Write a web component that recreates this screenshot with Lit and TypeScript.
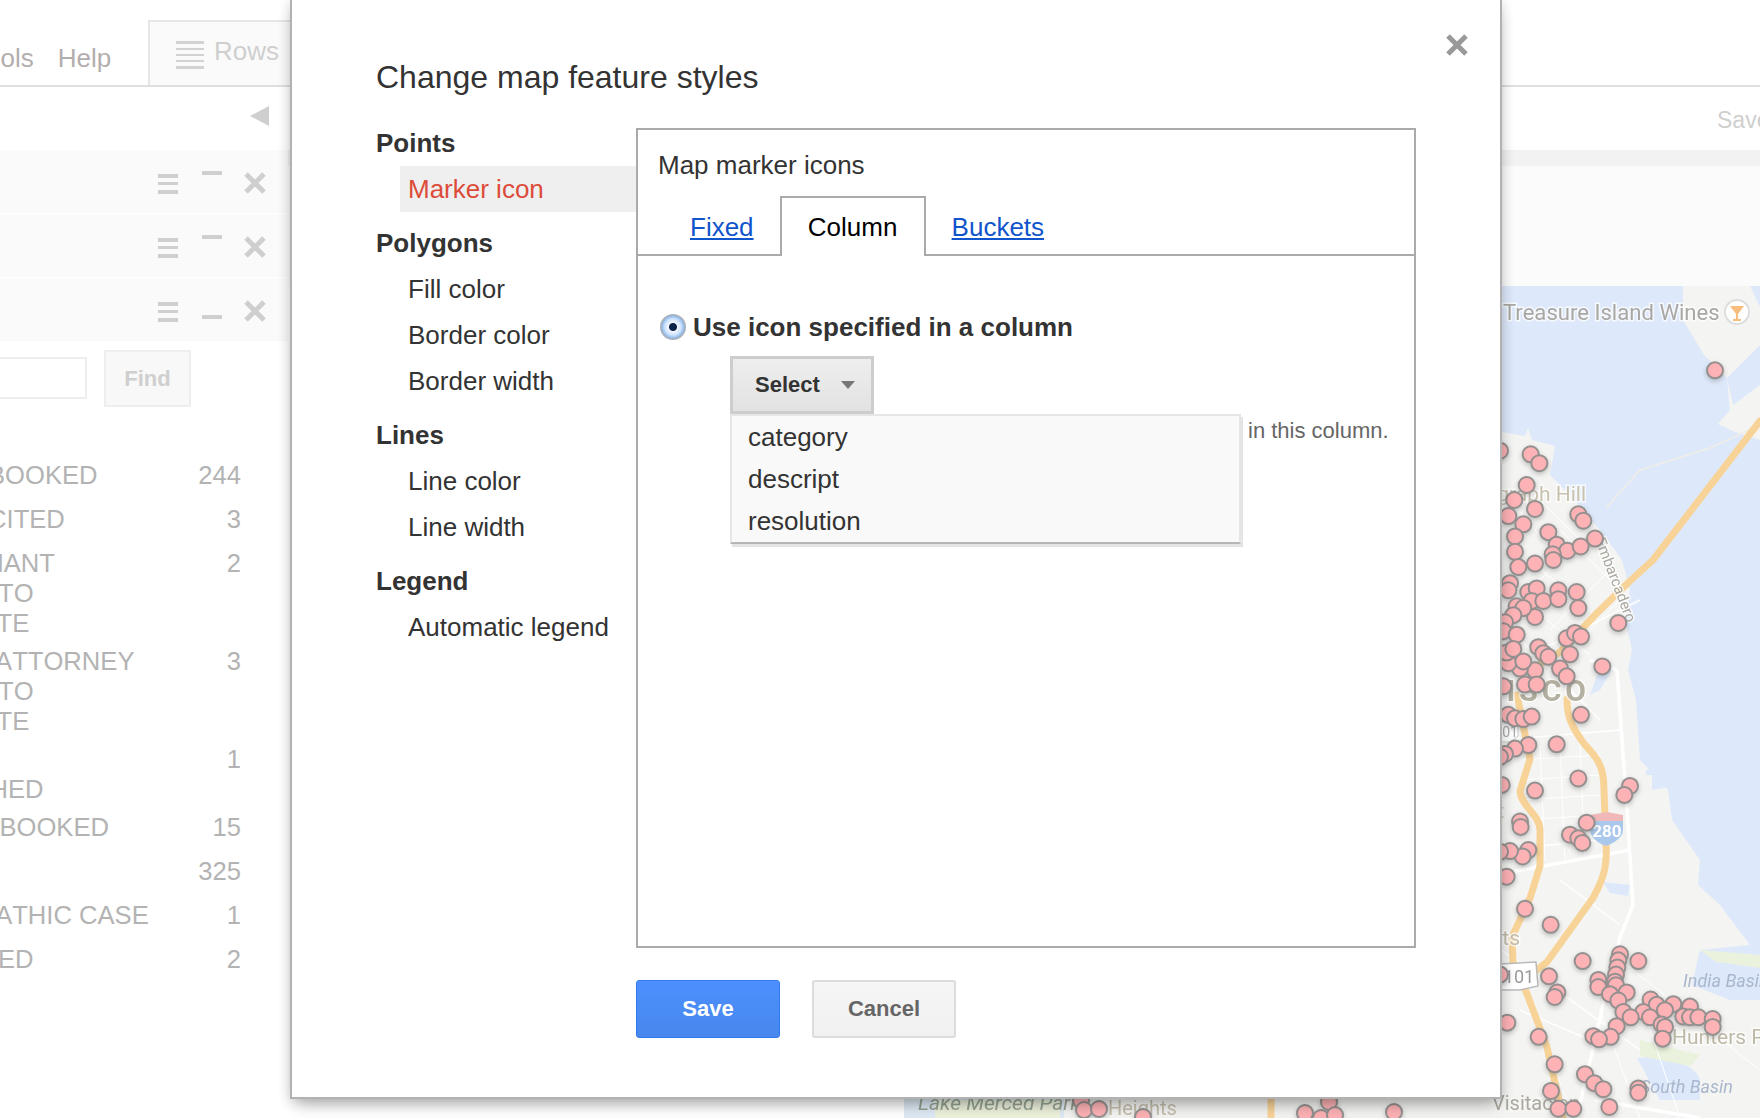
import { LitElement, html, css, svg } from "lit";
import { customElement } from "lit/decorators.js";

const Z5: [number, number][] = [[115,20],[165,10],[220,0],[90,65],[85,85],[145,90],[170,80],[155,115],[190,115],[235,85],[235,110],[290,90],[295,135],[165,160],[110,130],[130,135],[100,155],[75,175],[70,200],[110,210],[175,245],[190,262],[205,272],[260,220],[285,205],[303,215],[270,265],[415,177],[367,299],[240,305],[260,327],[165,310],[120,305],[85,290],[80,260],[100,250],[130,285],[135,350],[170,350],[70,355],[303,435],[85,435],[105,445],[130,447],[155,440],[145,520],[230,518],[105,530],[75,545],[60,553],[295,614],[165,648],[65,632],[450,635],[433,660],[320,738],[270,772],[295,782],[307,795],[120,735],[122,750],[145,815],[128,833],[90,818],[60,820],[80,890],[135,980],[212,1025],[308,1127],[420,1108],[475,1127],[415,1125],[412,1145],[408,1165],[405,1185],[355,1180],[355,1200],[408,1195],[440,1215],[390,1220],[415,1238],[207,1170],[232,1215],[224,1228],[512,1235],[530,1250],[580,1248],[555,1265],[630,1255],[610,1283],[630,1285],[655,1285],[698,1290],[698,1312],[490,1270],[510,1285],[430,1270],[452,1285],[545,1305],[555,1312],[410,1310],[392,1340],[340,1338],[357,1347],[548,1345],[82,1300],[176,1340],[224,1417],[315,1445],[343,1470],[370,1487],[475,1485],[475,1497],[213,1492],[235,1542],[280,1542],[388,1537],[60,1165]];
const Z4: [number, number][] = [[705,1037],[60,1262],[152,1272],[178,1297],[140,1358],[103,1400],[165,1425],[85,1445],[130,1468],[295,1440],[310,1458],[345,1508],[105,1502],[205,1490],[230,1525],[262,1542],[302,1530],[105,1545],[218,1552]];
const PINS: [number, number][] = [
  ...Z4.map(([x, y]) => [1480 + x / 3, y / 2.8] as [number, number]),
  ...Z5.map(([x, y]) => [1480 + x / 3, 560 + y / 2.81] as [number, number]),
  [1081,1100],[1084,1110],[1099,1109],[1143,1117],[1329,1102],[1305,1113],[1321,1118],[1335,1115],[1394,1112],
];

const ROWS: [string[], string][] = [
  [["ARREST, BOOKED"], "244"],
  [["ARREST, CITED"], "3"],
  [["COMPLAINANT", "REFUSES TO", "PROSECUTE"], "2"],
  [["DISTRICT ATTORNEY", "REFUSES TO", "PROSECUTE"], "3"],
  [["JUVENILE", "ADMONISHED"], "1"],
  [["JUVENILE BOOKED"], "15"],
  [["NONE"], "325"],
  [["PSYCHOPATHIC CASE"], "1"],
  [["UNFOUNDED"], "2"],
];

const NAV: [string, string[]][] = [
  ["Points", ["Marker icon"]],
  ["Polygons", ["Fill color", "Border color", "Border width"]],
  ["Lines", ["Line color", "Line width"]],
  ["Legend", ["Automatic legend"]],
];

@customElement("map-layer")
class MapLayer extends LitElement {
  static styles = css`
    :host { display: block; width: 856px; height: 832px; overflow: hidden; }
    svg { display: block; filter: blur(.6px); }
    text { font-family: Roboto, "Liberation Sans", sans-serif; }
    .halo { paint-order: stroke; stroke: rgba(255,255,255,.7); stroke-width: 3px; }
  `;
  render() {
    return html`<svg width="856" height="832" viewBox="904 286 856 832">
      <defs><filter id="b" x="-50%" y="-50%" width="200%" height="200%"><feGaussianBlur stdDeviation="2.5"/></filter></defs>
      <rect x="904" y="286" width="856" height="832" fill="#dde9fb"/>
      <path fill="#f4f4f2" d="M1683 286L1750 286L1760 307L1760 345L1727 378L1704 355L1683 320Z"/>
      <path fill="#f4f4f2" d="M1727 378L1733 405L1760 385L1760 440L1735 432L1718 424L1730 410Z"/>
      <path fill="#f4f4f2" d="M1501 432L1525 436L1528 428L1532 440L1555 446L1550 475L1575 500L1600 530L1622 560L1630 590L1625 620L1632 650L1628 670L1636 700L1640 760L1668 790L1672 820L1700 860L1698 885L1720 905L1750 945L1700 950L1692 985L1730 1000L1760 1000L1760 1118L1501 1118Z"/>
      <path fill="#dde9fb" d="M1637 1058C1660 1055 1695 1062 1700 1080L1700 1100L1660 1100Z"/>
      <path fill="#dde9fb" d="M1597 675L1612 670L1600 690L1590 695Z"/>
      <path fill="#dde9fb" d="M1603 882L1630 885L1628 896L1610 893Z"/>
      <path fill="#eaf2dd" d="M1700 950L1760 955L1760 968L1716 962Z"/>
      <path fill="#eaf2dd" d="M1640 1040L1700 1055L1690 1066L1640 1056Z"/>
      <path fill="#dde9fb" d="M1646 775L1652 775L1652 790L1680 785L1680 760L1675 760L1675 780L1660 782L1660 770L1646 770Z"/>
      <path fill="none" stroke="#f0ede6" stroke-width="1.5" d="M1606 508L1640 470L1710 448L1760 425"/>
      <rect x="904" y="1090" width="160" height="28" fill="#dfeaf6"/>
      <rect x="935" y="1100" width="125" height="18" fill="#edf2dc"/>
      <rect x="1064" y="1090" width="440" height="28" fill="#f4f4f2"/>
      <g fill="none" stroke="#ffffff" stroke-linejoin="round">
        <path stroke-width="1.5" d="M1501 620L1600 720M1501 670L1640 600M1501 740L1620 730M1501 850L1600 840M1501 950L1640 1050M1560 880L1620 925M1520 1010L1590 1040M1510 1110L1560 1090"/>
        <path stroke-width="1" d="M1520 760L1600 755M1520 780L1600 775M1520 800L1600 795M1520 820L1600 815M1540 745L1545 860M1560 745L1565 860M1580 745L1585 860M1530 560L1600 620M1560 530L1620 590M1510 590L1590 655M1580 540L1520 600M1610 570L1550 630M1620 600L1560 660M1510 500L1560 560M1530 490L1590 550M1530 1000L1570 1110M1600 1010L1640 1118M1640 1000L1680 1118M1620 960L1760 1070"/>
        <path stroke-width="3.5" d="M1617 670L1627 809L1633 905L1620 937L1603 1005L1580 1104M1590 660L1617 670M1500 874L1630 850M1595 1100L1700 1118"/>
      </g>
      <g fill="none" stroke="#f8d398" stroke-linecap="round" stroke-linejoin="round" stroke-width="7">
        <path d="M1760 421L1653 560L1630 581L1597 613L1560 652L1530 670"/>
        <path d="M1567 699C1567 715 1570 725 1585 745C1600 760 1604 770 1604 790L1606 845C1608 870 1600 885 1593 898L1547 962L1537 970"/>
        <path d="M1517 695L1530 759L1520 791C1520 805 1540 815 1540 830L1540 866L1530 898L1512 937L1513 962L1527 994L1547 1047L1563 1118"/>
        <path d="M1271 1090L1271 1118" />
      </g>
      <g>
        <path d="M1590 815L1607 818L1623 815L1623 830C1623 838 1612 844 1606 846C1600 844 1590 838 1590 830Z" fill="#a9c8ec"/>
        <path d="M1590 815L1607 812L1623 815L1623 821L1590 821Z" fill="#f0b8b8"/>
        <text x="1607" y="837" text-anchor="middle" font-size="17" font-weight="700" fill="#fff">280</text>
        <path d="M1500 964L1536 962L1538 986L1520 990L1500 990Z" fill="#fff" stroke="#bbb" stroke-width="1.5"/>
        <text x="1519" y="983" text-anchor="middle" font-size="18" fill="#999">101</text>
        <path d="M1500 722L1518 722L1518 736L1510 742L1500 742Z" fill="#fff" stroke="#ccc" stroke-width="1"/>
        <text x="1510" y="737" text-anchor="middle" font-size="14" fill="#aaa">01</text>
      </g>
      <text class="halo" x="1503" y="320" font-size="22.1" fill="#a9a7a4">Treasure Island Wines</text>
      <circle cx="1737" cy="312" r="12" fill="#fff" stroke="#ddd" stroke-width="2"/>
      <path d="M1730 306H1744L1738 314V319H1741V321H1733V319H1736V314Z" fill="#f9bd7d"/>
      <text class="halo" x="1586" y="501" text-anchor="end" font-size="21" fill="#c9c2b0">Telegraph Hill</text>
      <text transform="translate(1595 540) rotate(69)" font-size="15" fill="#a9a79f" class="halo">Embarcadero</text>
      <text class="halo" x="1520" y="945" text-anchor="end" font-size="21" fill="#c4bdab">Heights</text>
      <text x="1504" y="818" text-anchor="end" font-size="21" fill="#c4bdab">t</text>
      <text x="1683" y="987" font-size="18" font-style="italic" fill="#a9b6cd">India Basin</text>
      <text x="1672" y="1044" font-size="21" fill="#bfb9a8" class="halo">Hunters Point</text>
      <text x="1640" y="1093" font-size="18" font-style="italic" fill="#a9b6cd">South Basin</text>
      <text x="1492" y="1110" font-size="20" fill="#aaa89f">Visitacion</text>
      <text x="918" y="1110" font-size="21" font-style="italic" fill="#96a394">Lake Merced Park</text>
      <text x="1108" y="1115" font-size="20" fill="#c4bdab">Heights</text>
      <text x="1590" y="701" text-anchor="end" font-size="30" font-weight="700" letter-spacing="4" fill="#b5b1a2" class="halo">FRANCISCO</text>
      <g fill="#555" opacity=".35" filter="url(#b)">
        ${PINS.map(([x, y]) => svg`<circle cx="${x}" cy="${y + 2}" r="9"/>`)}
      </g>
      <g fill="#fdb2b5" stroke="#959090" stroke-width="2">
        ${PINS.map(([x, y]) => svg`<circle cx="${x}" cy="${y}" r="8"/>`)}
      </g>
    </svg>`;
  }
}

@customElement("app-root")
export class AppRoot extends LitElement {
  static styles = css`
    :host { display: block; position: relative; width: 1760px; height: 1118px; overflow: hidden; background: #fff;
      font-family: "Liberation Sans", Arial, sans-serif; }
    .bg-map { position: absolute; left: 904px; top: 286px; }
    .page { position: relative; display: flex; flex-direction: column; }
    .menubar { height: 85px; border-bottom: 2px solid #dfdfdf; display: flex; align-items: flex-end; box-sizing: content-box; }
    .menu { font-size: 26px; color: #b3aeae; display: flex; gap: 24px; margin-left: -27px; height: 43px; width: 175px; align-items: flex-start; line-height: 32px; padding-top: 0; }
    .rowtab { height: 63px; width: 200px; border: 2px solid #e6e6e6; border-bottom: none; background: #fafafa; display: flex; gap: 8px; box-sizing: content-box; align-items: flex-start; padding-left: 26px; color: #cfcfcf; font-size: 26px; line-height: 30px; }
    .rowtab span { margin-top: 14px; }
    .rowtab svg { margin-top: 19px; }
    .subbar { height: 63px; position: relative; display: flex; justify-content: flex-end; align-items: center; }
    .save-link { color: #cfcfcf; font-size: 23px; width: 43px; overflow: hidden; white-space: nowrap; margin-top: 4px; }
    .collapse { position: absolute; left: 250px; top: 19px; width: 0; height: 0; border-style: solid; border-width: 10px 19px 10px 0; border-color: transparent #cfcfcf transparent transparent; }
    .stripe { position: absolute; left: 288px; right: 0; top: 150px; height: 16px; background: #f2f2f2; }
    .pale { position: absolute; left: 288px; right: 0; top: 166px; height: 120px; background: #fbfbfb; }
    .panel { width: 288px; position: relative; }
    .layer { height: 63px; background: #fafafa; margin-bottom: 1px; position: relative; }
    .layer svg { position: absolute; left: 156px; top: 17px; }
    .find { display: flex; align-items: center; gap: 17px; margin-top: 8px; height: 59px; }
    .inp { width: 85px; height: 38px; border: 2px solid #eee; border-left: none; margin-top: -2px; }
    .find-b { width: 83px; height: 53px; border: 2px solid #eee; background: #f8f8f8; color: #cfcfcf; font-weight: 700; font-size: 22px; display: flex; align-items: center; justify-content: center; }
    .table { margin: 52px 0 0 -130px; width: 371px; display: flex; flex-direction: column; color: #b3b3b3; font-size: 25.6px; line-height: 30px; font-kerning: none; }
    .tr { display: flex; justify-content: space-between; min-height: 44px; padding-bottom: 8px; box-sizing: border-box; }
    .modal { position: absolute; left: 290px; top: -2px; width: 1212px; height: 1101px; box-sizing: border-box; border: 2px solid #b2b2b2; background: #fff; padding: 0 0 0 84px; box-shadow: 0 2px 12px rgba(0,0,0,.14), 0 10px 16px -6px rgba(0,0,0,.3); display: flex; flex-direction: column; color: #333; }
    .x { position: absolute; left: 1153px; top: 33px; }
    h1 { margin: 55px 0 0; font-weight: 400; font-size: 32px; line-height: 44px; color: #333; }
    .body { display: flex; margin-top: 21px; align-items: flex-start; }
    nav { width: 260px; display: flex; flex-direction: column; gap: 8px; }
    .h { font-weight: 700; font-size: 26px; line-height: 46px; }
    .i { font-size: 26px; line-height: 46px; margin-left: 24px; padding-left: 8px; }
    .i.on { color: #dd4b39; background: #efefef; }
    .tabs { width: 780px; height: 820px; margin-top: 8px; border: 2px solid #aaa; box-sizing: border-box; position: relative; }
    .tabs-title { font-size: 26px; line-height: 34px; margin: 18px 0 0 20px; }
    .tabbar { display: flex; align-items: flex-end; height: 58px; margin-top: 14px; padding-left: 52px; border-bottom: 2px solid #aaa; box-sizing: content-box; }
    .tabbar a { font-size: 26px; line-height: 30px; color: #1155cc; text-decoration: underline; padding-bottom: 12px; }
    .tab { box-sizing: border-box; margin: 0 26px -2px 26px; width: 146px; border: 2px solid #aaa; border-bottom: none; background: #fff; font-size: 26px; color: #000; text-align: center; line-height: 30px; padding-top: 14px; height: 60px; }
    .choice { margin-top: 54px; display: flex; align-items: center; gap: 7px; padding-left: 22px; font-weight: 700; font-size: 26px; line-height: 34px; }
    .radio { width: 26px; height: 26px; box-sizing: border-box; border-radius: 50%; border: 2px solid #a7b3c0; background: radial-gradient(circle, #0b2447 0 3.5px, #f3f8ff 4.5px, #cfe3fb 8px, #8fbdf4 11px); flex: none; }
    .sel-wrap { position: relative; margin: 12px 0 0 92px; width: 510px; }
    .sel { width: 144px; height: 58px; box-sizing: border-box; border: 3px solid #cdcdcd; background: linear-gradient(#eeeeee, #e2e2e2); font-weight: 700; font-size: 22px; display: flex; align-items: center; padding-left: 22px; gap: 21px; }
    .arrow { width: 0; height: 0; border-style: solid; border-width: 8px 7px 0; border-color: #777 transparent transparent; }
    .menu-list { position: absolute; left: 0; top: 58px; width: 511px; height: 130px; box-sizing: border-box; background: #f9f9f9; border: 2px solid #e6e6e6; border-bottom: 2px solid #b5b5b5; box-shadow: 2px 3px 0 #e4e4e4; font-size: 26px; padding: 0 0 0 16px; color: #333; line-height: 42px; }
    .note { margin: 2px 0 0 610px; font-size: 22px; line-height: 30px; color: #666; }
    .actions { display: flex; gap: 32px; margin: 32px 0 0 260px; }
    .btn { width: 144px; height: 58px; box-sizing: border-box; border-radius: 3px; font-weight: 700; font-size: 22px; display: flex; align-items: center; justify-content: center; }
    .save { background: linear-gradient(#4d90fe, #4787ed); border: 1px solid #3079ed; color: #fff; }
    .cancel { background: linear-gradient(#f5f5f5, #f1f1f1); border: 2px solid #dcdcdc; color: #666; }
  `;

  private layerIcons(low: boolean) {
    return html`<svg width="116" height="30" viewBox="0 0 116 30">
      <g fill="#cfcfcf">
        <rect x="2" y="7" width="20" height="4"/><rect x="2" y="15" width="20" height="3"/><rect x="2" y="23" width="20" height="4"/>
        <rect x="46" y="${low ? 20 : 4}" width="20" height="4"/>
      </g>
      <path d="M90 7L108 25M108 7L90 25" stroke="#cfcfcf" stroke-width="5" fill="none"/>
    </svg>`;
  }

  render() {
    return html`
      <map-layer class="bg-map"></map-layer>
      <div class="stripe"></div>
      <div class="pale"></div>
      <div class="page">
        <div class="menubar">
          <div class="menu"><span>Tools</span><span>Help</span></div>
          <div class="rowtab">
            <svg width="30" height="28" viewBox="0 0 30 28" fill="#d2d2d2"><rect y="0" width="28" height="3"/><rect y="7" width="28" height="2"/><rect y="13" width="28" height="2"/><rect y="19" width="28" height="2"/><rect y="25" width="28" height="3"/></svg>
            <span>Rows</span>
          </div>
        </div>
        <div class="subbar"><div class="collapse"></div><div class="save-link">Saved</div></div>
        <div class="panel">
          <div class="layer">${this.layerIcons(false)}</div>
          <div class="layer">${this.layerIcons(false)}</div>
          <div class="layer">${this.layerIcons(true)}</div>
          <div class="find"><div class="inp"></div><div class="find-b">Find</div></div>
          <div class="table">
            ${ROWS.map(([l, n]) => html`<div class="tr"><div>${l.map((t) => html`<div>${t}</div>`)}</div><div>${n}</div></div>`)}
          </div>
        </div>
      </div>
      <div class="modal">
        <svg class="x" width="24" height="24" viewBox="0 0 24 24"><path d="M3 3L21 21M21 3L3 21" stroke="#999" stroke-width="5" fill="none"/></svg>
        <h1>Change map feature styles</h1>
        <div class="body">
          <nav>
            ${NAV.map(([h, items]) => html`<div>
              <div class="h">${h}</div>
              ${items.map((t) => html`<div class="i ${t === "Marker icon" ? "on" : ""}">${t}</div>`)}
            </div>`)}
          </nav>
          <div class="tabs">
            <div class="tabs-title">Map marker icons</div>
            <div class="tabbar"><a>Fixed</a><div class="tab">Column</div><a>Buckets</a></div>
            <div class="choice"><span class="radio"></span>Use icon specified in a column</div>
            <div class="sel-wrap">
              <div class="sel">Select<span class="arrow"></span></div>
              <div class="menu-list"><div>category</div><div>descript</div><div>resolution</div></div>
            </div>
            <div class="note">in this column.</div>
          </div>
        </div>
        <div class="actions"><div class="btn save">Save</div><div class="btn cancel">Cancel</div></div>
      </div>
    `;
  }
}
